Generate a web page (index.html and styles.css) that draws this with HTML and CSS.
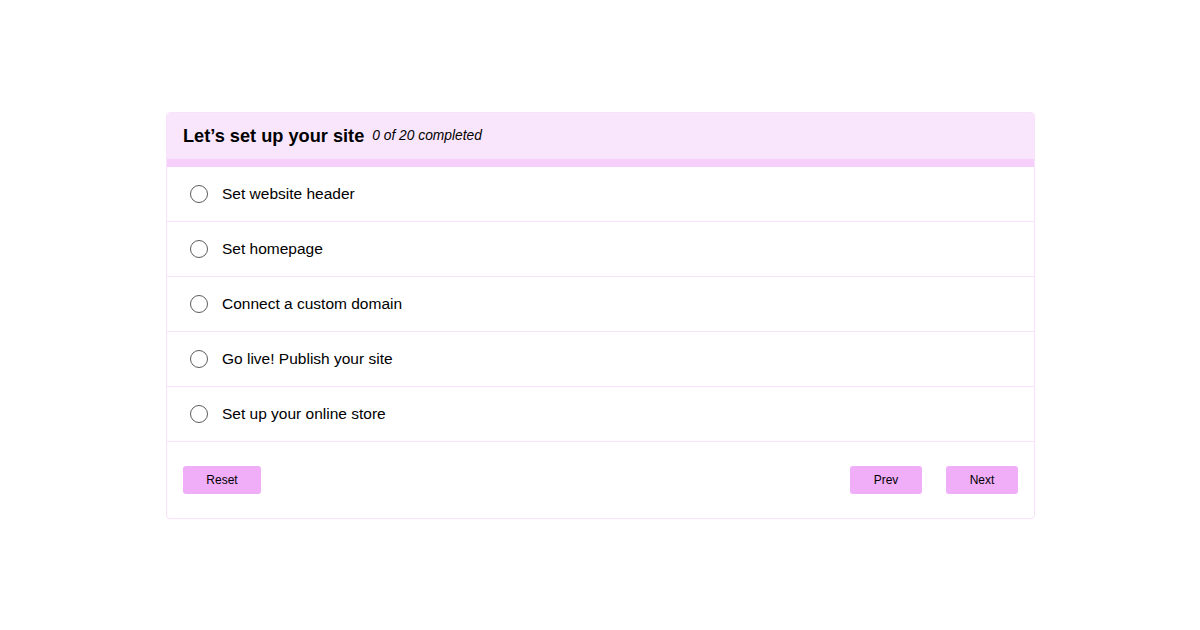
FILE: index.html
```html
<!DOCTYPE html>
<html>
<head>
<meta charset="utf-8">
<link rel="stylesheet" href="styles.css">
</head>
<body>
<div class="page">
  <div class="card">
    <div class="header">
      <h1 class="title">Let’s set up your site</h1>
      <span class="count">0 of 20 completed</span>
    </div>
    <div class="progress"></div>
    <ul class="tasks">
      <li class="task"><span class="check"></span><span class="label">Set website header</span></li>
      <li class="task"><span class="check"></span><span class="label">Set homepage</span></li>
      <li class="task"><span class="check"></span><span class="label">Connect a custom domain</span></li>
      <li class="task"><span class="check"></span><span class="label">Go live! Publish your site</span></li>
      <li class="task"><span class="check"></span><span class="label">Set up your online store</span></li>
    </ul>
    <div class="footer">
      <button class="btn btn-reset">Reset</button>
      <div class="nav">
        <button class="btn btn-nav">Prev</button>
        <button class="btn btn-nav">Next</button>
      </div>
    </div>
  </div>
</div>
</body>
</html>
```

FILE: styles.css
```css
* { box-sizing: border-box; }
html, body { margin: 0; padding: 0; background: #fff; }
body { font-family: "Liberation Sans", Arial, sans-serif; color: #000; }
.page { padding-top: 112px; display: flex; justify-content: center; }
.card {
  width: 869px;
  margin-left: 1px;
  border: 1px solid #f9e1fc;
  border-radius: 4px;
  overflow: hidden;
}
.header {
  background: #f9e6fc;
  height: 46px;
  padding: 0 16px;
  display: flex;
  align-items: center;
  gap: 8px;
}
.title { margin: 0; font-size: 18.2px; font-weight: bold; }
.count { font-size: 13.8px; font-style: italic; margin-top: -2px; }
.progress { height: 8px; background: #f6d0fa; }
.tasks { list-style: none; margin: 0; padding: 0; }
.task {
  height: 55px;
  border-bottom: 1px solid #f9e1fc;
  display: flex;
  align-items: center;
  padding-left: 23px;
  padding-bottom: 1px;
}
.check {
  width: 18px; height: 18px;
  border: 1.5px solid #5c5c5c;
  border-radius: 50%;
  margin-right: 14px;
  flex: none;
}
.label { font-size: 15.5px; }
.footer {
  display: flex;
  justify-content: space-between;
  align-items: center;
  padding: 24px 16px 24px 16px;
}
.nav { display: flex; gap: 24px; }
.btn {
  font-family: "Liberation Sans", Arial, sans-serif;
  font-size: 12px;
  color: #000;
  background: #f0aef9;
  border: none;
  border-radius: 3px;
  height: 28px;
  padding: 0;
}
.btn-reset { width: 78px; }
.btn-nav { width: 72px; }
```
